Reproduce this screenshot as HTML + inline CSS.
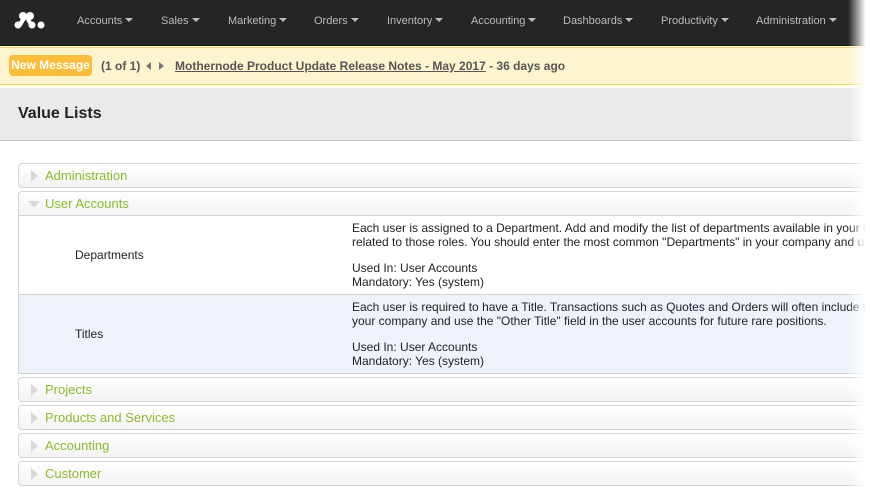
<!DOCTYPE html>
<html><head><meta charset="utf-8"><style>
*{margin:0;padding:0;box-sizing:border-box}
body{width:870px;height:489px;overflow:hidden;background:#fff;font-family:"Liberation Sans",Arial,sans-serif;position:relative}
.nav{position:absolute;left:0;top:0;width:870px;height:46px;background:#252525;border-bottom:1px solid #111}
.nav span{position:absolute;top:15px;color:#bcbcbc;font-size:11px}
.nav span:after{content:"";display:inline-block;margin-left:3px;border-left:4px solid transparent;border-right:4px solid transparent;border-top:4px solid #bcbcbc;vertical-align:2px}
.msg{position:absolute;left:0;top:47px;width:870px;height:38px;background:#fef5cf;border-top:1px solid #f4d93a;border-bottom:1px solid #f4d93a}
.btn{position:absolute;left:9px;top:7px;width:83px;height:21px;background:#fbbd3a;border-radius:4px;color:#fff;font-weight:bold;font-size:12px;line-height:21px;text-align:center}
.msg .t{position:absolute;top:11px;font-size:12px;font-weight:bold;color:#555}
.hd{position:absolute;left:0;top:88px;width:870px;height:53px;background:#e8eaeb;border-bottom:1px solid #c3c3c3}
.hd b{position:absolute;left:18px;top:17px;font-size:16px;color:#222}
.p{position:absolute;left:18px;width:860px;height:25px;border:1px solid #d4d4d4;border-radius:4px;background:linear-gradient(#fff,#f3f3f3)}
.p span{position:absolute;left:26px;top:4px;color:#8dbb2b;font-size:13px}
.p i{position:absolute;left:12px;top:6px;border-top:6px solid transparent;border-bottom:6px solid transparent;border-left:7px solid #d8d8d8}
.row{position:absolute;left:18px;width:860px;height:79px;border-left:1px solid #d4d4d4;font-size:12px;color:#222}
.row .n{position:absolute;left:56px;top:32px}
.row .d{position:absolute;left:333px;top:5px;line-height:14px;white-space:nowrap}
.row .d .g{height:12px}
.fade{position:absolute;right:0;top:0;width:22px;height:489px;background:linear-gradient(to right,rgba(255,255,255,0),#fff 80%)}
</style></head><body>
<div class="nav">
<svg style="position:absolute;left:14px;top:11px" width="32" height="20" viewBox="0 0 32 20"><g fill="#fff"><circle cx="9" cy="5" r="4"/><circle cx="16" cy="5" r="4"/><circle cx="4" cy="14" r="3.5"/><circle cx="27" cy="14" r="3.5"/><circle cx="18" cy="14" r="3.5"/><path d="M5 11 L9 5 L12 8 L7 16Z"/><path d="M12 4 L20 13 L16 16 L11 7Z"/></g></svg>
<span style="left:77px">Accounts</span><span style="left:161px">Sales</span><span style="left:228px">Marketing</span><span style="left:314px">Orders</span><span style="left:387px">Inventory</span><span style="left:471px">Accounting</span><span style="left:563px">Dashboards</span><span style="left:661px">Productivity</span><span style="left:756px">Administration</span>
</div>
<div class="msg"><div class="btn">New Message</div>
<div class="t" style="left:101px">(1 of 1)</div>
<div style="position:absolute;left:146px;top:14px;border-top:4px solid transparent;border-bottom:4px solid transparent;border-right:5px solid #777"></div>
<div style="position:absolute;left:159px;top:14px;border-top:4px solid transparent;border-bottom:4px solid transparent;border-left:5px solid #777"></div>
<div class="t" style="left:175px"><u>Mothernode Product Update Release Notes - May 2017</u> - 36 days ago</div>
</div>
<div class="hd"><b>Value Lists</b></div>
<div class="p" style="top:163px"><i></i><span>Administration</span></div>
<div class="p" style="top:191px;height:25px;border-bottom-left-radius:0;border-bottom-right-radius:0"><i style="top:9px;left:9px;border-left:6px solid transparent;border-right:6px solid transparent;border-top:7px solid #d8d8d8;border-bottom:0"></i><span>User Accounts</span></div>
<div class="row" style="top:216px;border-bottom:1px solid #d4d4d4"><div class="n">Departments</div><div class="d">Each user is assigned to a Department. Add and modify the list of departments available in your company<br>related to those roles. You should enter the most common "Departments" in your company and use<div class="g"></div>Used In: User Accounts<br>Mandatory: Yes (system)</div></div>
<div class="row" style="top:295px;background:#eef3fb;border-bottom:1px solid #d4d4d4;height:79px"><div class="n">Titles</div><div class="d">Each user is required to have a Title. Transactions such as Quotes and Orders will often include the<br>your company and use the "Other Title" field in the user accounts for future rare positions.<div class="g"></div>Used In: User Accounts<br>Mandatory: Yes (system)</div></div>
<div class="p" style="top:377px"><i></i><span>Projects</span></div>
<div class="p" style="top:405px"><i></i><span>Products and Services</span></div>
<div class="p" style="top:433px"><i></i><span>Accounting</span></div>
<div class="p" style="top:461px"><i></i><span>Customer</span></div>
<div class="fade"></div>
</body></html>
